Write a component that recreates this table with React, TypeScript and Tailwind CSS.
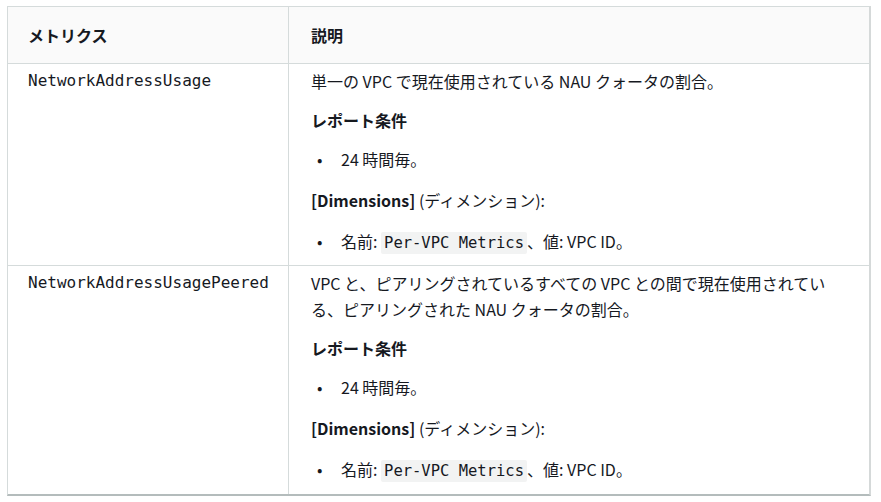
import React from "react";

const sans = "font-['Noto_Sans_CJK_JP','Noto_Sans',sans-serif]";
const mono = "font-['DejaVu_Sans_Mono','Liberation_Mono',monospace]";

function Code({ children }: { children: React.ReactNode }) {
  return (
    <code className={`${mono} text-[15.5px] bg-[#f2f3f3] px-[3px] py-[2px] rounded-[2px] text-[#16191f]`}>
      {children}
    </code>
  );
}

function Bullet({ children }: { children: React.ReactNode }) {
  return (
    <div className="flex items-start h-[26px]">
      <span className="w-[30px] pl-[6px] shrink-0">•</span>
      <span>{children}</span>
    </div>
  );
}

function Desc({ lines }: { lines: string[] }) {
  return (
    <div className="flex flex-col">
      <div className="mb-[13px]">
        {lines.map((l, i) => (
          <div key={i} className="h-[26px] whitespace-nowrap">{l}</div>
        ))}
      </div>
      <div className="font-bold h-[26px] mb-[13px]">レポート条件</div>
      <div className="mb-[15px]">
        <Bullet>24 時間毎。</Bullet>
      </div>
      <div className="h-[26px] mb-[15px]">
        <span className="font-bold">[Dimensions]</span> (ディメンション):
      </div>
      <Bullet>
        名前: <Code>Per-VPC Metrics</Code>、値: VPC ID。
      </Bullet>
    </div>
  );
}

export default function App() {
  return (
    <div className={`w-[881px] h-[502px] bg-white pt-[6px] pl-[7px] ${sans} text-[16px] leading-[26px] text-[#16191f]`}>
      <div className="w-[864px] border-l border-t border-[#d5dbdb] border-r-2 border-r-[#d5d9d9] border-b-2 border-b-[#b4bcbc]">
        <div className="flex bg-[#fafafa] border-b border-[#d5dbdb] h-[57px]">
          <div className="w-[281px] shrink-0 border-r border-[#d5dbdb] pl-[20px] flex items-center font-bold">
            メトリクス
          </div>
          <div className="flex-1 pl-[22px] flex items-center font-bold">説明</div>
        </div>
        <div className="flex border-b border-[#d5dbdb]">
          <div className={`w-[281px] shrink-0 border-r border-[#d5dbdb] pl-[20px] pt-[4px] ${mono} text-[16px]`}>
            NetworkAddressUsage
          </div>
          <div className="flex-1 pl-[22px] pt-[4px] pb-[11px]">
            <Desc lines={["単一の VPC で現在使用されている NAU クォータの割合。"]} />
          </div>
        </div>
        <div className="flex">
          <div className={`w-[281px] shrink-0 border-r border-[#d5dbdb] pl-[20px] pt-[4px] ${mono} text-[16px]`}>
            NetworkAddressUsagePeered
          </div>
          <div className="flex-1 pl-[22px] pt-[4px] pb-[12px]">
            <Desc
              lines={[
                "VPC と、ピアリングされているすべての VPC との間で現在使用されてい",
                "る、ピアリングされた NAU クォータの割合。",
              ]}
            />
          </div>
        </div>
      </div>
    </div>
  );
}
